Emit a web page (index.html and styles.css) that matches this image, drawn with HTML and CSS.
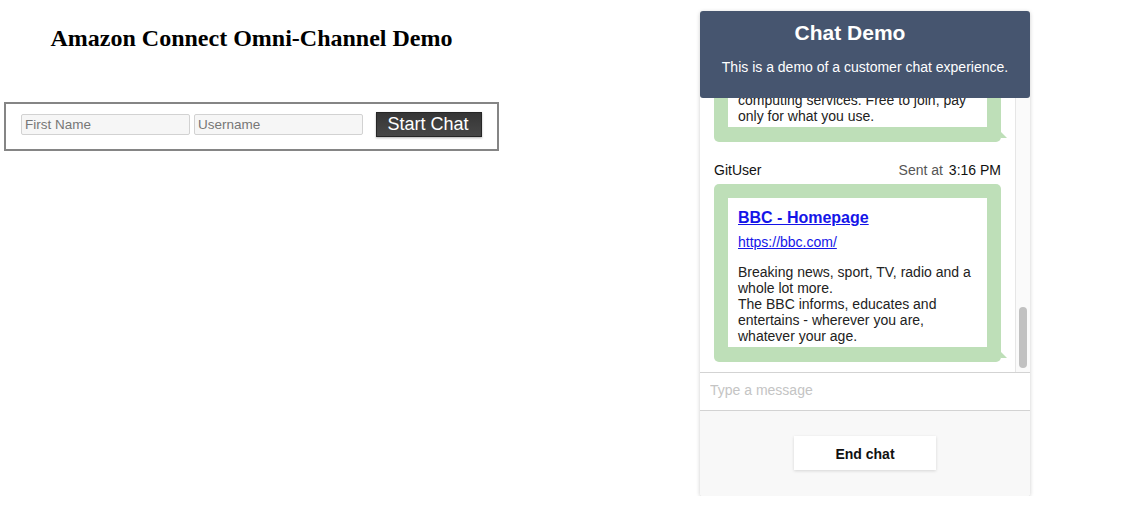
FILE: index.html
```html
<!DOCTYPE html>
<html lang="en">
<head>
<meta charset="utf-8">
<title>Amazon Connect Omni-Channel Demo</title>
<link rel="stylesheet" href="styles.css">
</head>
<body>
<div class="page">
  <section class="left">
    <h2 class="title">Amazon Connect Omni-Channel Demo</h2>
    <form class="start-form">
      <input class="field" type="text" placeholder="First Name">
      <input class="field" type="text" placeholder="Username">
      <button class="start-btn" type="button">Start Chat</button>
    </form>
  </section>

  <section class="widget">
    <div class="transcript">
      <div class="messages">
        <div class="msg">
          <div class="meta"><span class="who">GitUser</span><span class="when"><span class="sent">Sent at</span> 3:15 PM</span></div>
          <div class="bubble">
            <div class="card">
              <a class="card-title" href="#">Amazon Web Services (AWS) - Cloud Computing Services</a>
              <a class="card-url" href="#">https://aws.amazon.com/</a>
              <p class="card-desc">Amazon Web Services offers reliable, scalable, and inexpensive cloud<br>computing services. Free to join, pay only for what you use.</p>
            </div>
          </div>
        </div>
        <div class="msg">
          <div class="meta"><span class="who">GitUser</span><span class="when"><span class="sent">Sent at</span> 3:16 PM</span></div>
          <div class="bubble">
            <div class="card">
              <a class="card-title" href="#">BBC - Homepage</a>
              <a class="card-url" href="#">https://bbc.com/</a>
              <p class="card-desc">Breaking news, sport, TV, radio and a whole lot more.<br>The BBC informs, educates and entertains - wherever you are, whatever your age.</p>
            </div>
          </div>
        </div>
      </div>
      <div class="scrolltrack"><div class="thumb"></div></div>
    </div>
    <div class="composer"><input class="composer-input" type="text" placeholder="Type a message"></div>
    <div class="footer"><button class="end-btn" type="button">End chat</button></div>

    <header class="chat-header">
      <h3 class="chat-title">Chat Demo</h3>
      <p class="chat-sub">This is a demo of a customer chat experience.</p>
    </header>
  </section>
</div>
</body>
</html>
```

FILE: styles.css
```css
* { box-sizing: border-box; }

body {
  margin: 0;
  background: #fff;
  font-family: "Liberation Sans", Arial, sans-serif;
}

.page {
  display: flex;
  align-items: flex-start;
  gap: 201px;
  padding-left: 4px;
}

.left { width: 495px; }

.title {
  margin: 24px 0 50px;
  font-family: "Liberation Serif", "Times New Roman", serif;
  font-size: 24px;
  font-weight: bold;
  line-height: 28px;
  text-align: center;
  color: #000;
}

.start-form {
  display: flex;
  align-items: center;
  height: 49px;
  margin: 0;
  padding: 0 0 4px 15px;
  border: 2px solid #858585;
}

.field {
  width: 169px;
  height: 21px;
  margin-right: 4px;
  padding: 0 3px;
  border: 1px solid #d2d2d2;
  border-radius: 2px;
  background: #f6f6f6;
  font-family: "Liberation Sans", Arial, sans-serif;
  font-size: 13.5px;
  color: #333;
}
.field::placeholder { color: #777; }

.start-btn {
  margin-left: 9px;
  width: 106px;
  height: 25px;
  padding: 0 2px 0 0;
  border: 1px solid #262626;
  background: linear-gradient(#363636, #474747);
  box-shadow: 0 1px 2px rgba(0,0,0,0.3);
  color: #fff;
  font-family: "Liberation Sans", Arial, sans-serif;
  font-size: 18px;
  line-height: 23px;
}

/* Chat widget */
.widget {
  position: relative;
  width: 330px;
  margin-top: 11px;
  background: #fff;
  box-shadow: 0 1px 4px rgba(0,0,0,0.2);
  border-radius: 3px;
}

.transcript {
  display: flex;
  height: 361px;
}

.messages {
  flex: 1;
  display: flex;
  flex-direction: column;
  justify-content: flex-end;
  overflow: hidden;
  padding: 0 14px 10px;
}

.msg + .msg { margin-top: 20px; }

.meta {
  display: flex;
  justify-content: space-between;
  height: 16px;
  margin-bottom: 6px;
  font-size: 14px;
  line-height: 16px;
  color: #111;
}
.sent { color: #555; margin-right: 2px; }

.bubble {
  position: relative;
  padding: 14px 14px 15px;
  background: #bedfb8;
  border-radius: 5px;
}
.bubble::after {
  content: "";
  position: absolute;
  right: -6px;
  bottom: 4px;
  border-left: 6px solid #bedfb8;
  border-top: 6px solid transparent;
}

.card {
  display: flex;
  flex-direction: column;
  align-items: flex-start;
  padding: 10px 10px 3px;
  background: #fff;
}

.card-title {
  font-size: 16px;
  font-weight: bold;
  line-height: 19px;
  color: #1515e8;
}
.card-url {
  margin-top: 7px;
  font-size: 14px;
  line-height: 16px;
  color: #1515e8;
}
.card-desc {
  margin: 14px 0 0;
  font-size: 14px;
  line-height: 16px;
  color: #222;
}

.scrolltrack {
  display: flex;
  flex-direction: column;
  justify-content: flex-end;
  width: 15px;
  padding: 0 3px 4px 3px;
  border-left: 1px solid #e6e6e6;
  background: #fafafa;
}
.thumb {
  width: 8px;
  height: 61px;
  border-radius: 4px;
  background: #c1c1c1;
}

.composer {
  border-top: 1px solid #d3d3d3;
  border-bottom: 1px solid #d3d3d3;
}
.composer-input {
  display: block;
  width: 100%;
  height: 37px;
  padding: 0 10px 3px;
  border: 0;
  outline: none;
  background: #fff;
  font-family: "Liberation Sans", Arial, sans-serif;
  font-size: 14px;
}
.composer-input::placeholder { color: #c4c4c4; }

.footer {
  display: flex;
  justify-content: center;
  height: 85px;
  padding-top: 25px;
  background: #f8f8f8;
  border-radius: 0 0 3px 3px;
}
.end-btn {
  width: 142px;
  height: 34px;
  padding-top: 2px;
  border: 0;
  background: #fff;
  box-shadow: 0 1px 3px rgba(0,0,0,0.14);
  font-family: "Liberation Sans", Arial, sans-serif;
  font-size: 14px;
  font-weight: bold;
  color: #111;
}

.chat-header {
  position: absolute;
  top: 0;
  left: 0;
  right: 0;
  height: 87px;
  padding-top: 10px;
  background: #46556f;
  border-radius: 3px;
  color: #fff;
  text-align: center;
}
.chat-title {
  margin: 0;
  padding-right: 30px;
  font-size: 21px;
  font-weight: bold;
  line-height: 24px;
}
.chat-sub {
  margin: 14px 0 0;
  font-size: 14px;
  line-height: 17px;
}
```
